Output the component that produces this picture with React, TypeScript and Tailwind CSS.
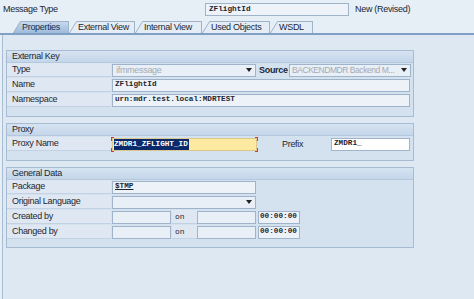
import React from 'react';

const SANS = "font-['Liberation_Sans',Arial,sans-serif] text-[9px] tracking-[-0.3px] leading-none whitespace-nowrap text-[#1c2733]";
const MONO = "font-['Liberation_Mono','Courier_New',monospace] text-[7.7px] font-bold leading-none whitespace-nowrap text-[#1c2733]";

const Arrow = () => (
  <svg width="6" height="4" viewBox="0 0 6 4" className="shrink-0 mx-[3px]">
    <path d="M0 0H6L3 4Z" fill="#222" />
  </svg>
);

function Tab({ label, width, active = false }: { label: string; width: number; active?: boolean }) {
  const fill = active ? 'url(#tabActive)' : '#e4ecf5';
  return (
    <div className="flex h-[12px]">
      <svg width="8" height="12" viewBox="0 0 8 12" className="shrink-0">
        <defs>
          <linearGradient id="tabActive" x1="0" y1="0" x2="0" y2="1">
            <stop offset="0" stopColor="#c6d8ed" />
            <stop offset="1" stopColor="#9fbbdb" />
          </linearGradient>
        </defs>
        <path d="M0 12L7 0H8V12Z" fill={fill} />
        <path d="M0.5 12L7.5 0.5H8" stroke="#9fb3c9" strokeWidth="1" fill="none" />
      </svg>
      <div
        style={{ width }}
        className={`h-full border-t border-r border-[#9fb3c9] pl-[1px] flex items-center ${SANS} ${
          active ? 'bg-gradient-to-b from-[#c6d8ed] to-[#9fbbdb] !text-[#15304f]' : 'bg-[#e4ecf5]'
        }`}
      >
        {label}
      </div>
    </div>
  );
}

function Group({ title, height, children }: { title: string; height: number; children: React.ReactNode }) {
  return (
    <div style={{ height }} className="w-[408px] border border-[#a7bcd3] bg-[#d4e2f0] flex flex-col">
      <div className={`h-[12px] shrink-0 border-b border-[#b4c7dc] bg-gradient-to-b from-[#d6e3f1] to-[#c4d6ea] pl-[5px] flex items-center ${SANS}`}>
        {title}
      </div>
      <div className="flex flex-col gap-[1px]">{children}</div>
    </div>
  );
}

function Label({ text }: { text: string }) {
  return (
    <div className={`w-[104px] h-full shrink-0 bg-[#dfe8f2] border-b border-[#c3d2e3] pl-[5px] flex items-center ${SANS}`}>
      {text}
    </div>
  );
}

const box = 'h-[13px] border border-[#9fb4ca] flex items-center shrink-0 overflow-hidden';

export default function App() {
  return (
    <div className="w-[474px] h-[299px] overflow-hidden bg-[#e6eef6] flex flex-col">
      {/* header */}
      <div className="h-[21px] shrink-0 flex items-center pb-[2px]">
        <span className={`pl-[3px] w-[205px] ${SANS}`}>Message Type</span>
        <div className={`${box} w-[144px] bg-[#eef3f9] pl-[3px] ${MONO}`}>ZFlightId</div>
        <span className={`ml-[6px] ${SANS}`}>New (Revised)</span>
      </div>

      {/* tabs */}
      <div className="h-[12px] shrink-0 flex pl-[13px]">
        <Tab label="Properties" width={48} active />
        <Tab label="External View" width={58} />
        <Tab label="Internal View" width={59} />
        <Tab label="Used Objects" width={60} />
        <Tab label="WSDL" width={35} />
      </div>
      <div className="h-[2px] shrink-0 bg-[#7f9fc4]" />

      {/* content */}
      <div className="flex-1 ml-[2px] border-l border-[#a9bdd2] bg-[#dee8f3] pl-[3px] pt-[15px] flex flex-col gap-[6px]">
        <Group title="External Key" height={67}>
          <div className="h-[14px] flex items-center">
            <Label text="Type" />
            <div className={`${box} ml-[1px] w-[144px] bg-[#e9eff6] pl-[3px] ${SANS} !text-[#a3abb4]`}>
              <span className="flex-1">ifmmessage</span>
              <Arrow />
            </div>
            <div className={`w-[33px] pl-[3px] font-bold ${SANS}`}>Source</div>
            <div className={`${box} w-[122px] bg-[#e9eff6] pl-[2px] ${SANS} !text-[#a3abb4]`}>
              <span className="flex-1 text-[8.5px] tracking-[-0.45px]">BACKENDMDR Backend M...</span>
              <Arrow />
            </div>
          </div>
          <div className="h-[14px] flex items-center">
            <Label text="Name" />
            <div className={`${box} ml-[1px] w-[298px] bg-[#edf2f8] pl-[2px] ${MONO}`}>ZFlightId</div>
          </div>
          <div className="h-[14px] flex items-center">
            <Label text="Namespace" />
            <div className={`${box} ml-[1px] w-[298px] bg-[#edf2f8] pl-[2px] ${MONO}`}>urn:mdr.test.local:MDRTEST</div>
          </div>
        </Group>

        <Group title="Proxy" height={38}>
          <div className="h-[14px] mt-[1px] flex items-center">
            <Label text="Proxy Name" />
            <div className={`${box} !overflow-visible relative ml-[1px] w-[145px] bg-[#fee9a1] border-[#d9c88a] pl-[1px] ${MONO}`}>
              <span className="bg-[#0b2a6b] text-white leading-[11px] pr-[1px]">ZMDR1_ZFLIGHT_ID</span>
              <span className="absolute -left-[2px] -top-[2px] w-[3px] h-[4px] border-l border-t border-[#d83a3a]" />
              <span className="absolute -left-[2px] -bottom-[2px] w-[3px] h-[4px] border-l border-b border-[#d83a3a]" />
              <span className="absolute -right-[2px] -top-[2px] w-[3px] h-[4px] border-r border-t border-[#d83a3a]" />
              <span className="absolute -right-[2px] -bottom-[2px] w-[3px] h-[4px] border-r border-b border-[#d83a3a]" />
            </div>
            <div className={`w-[74px] pl-[25px] ${SANS}`}>Prefix</div>
            <div className={`${box} w-[79px] bg-white pl-[2px] ${MONO}`}>ZMDR1_</div>
          </div>
        </Group>

        <Group title="General Data" height={81}>
          <div className="h-[14px] flex items-center">
            <Label text="Package" />
            <div className={`${box} ml-[1px] w-[144px] bg-[#edf2f8] pl-[2px] ${MONO}`}>
              <span className="underline">$TMP</span>
            </div>
          </div>
          <div className="h-[14px] flex items-center">
            <Label text="Original Language" />
            <div className={`${box} ml-[1px] w-[144px] bg-[#e9eff6] justify-end`}>
              <Arrow />
            </div>
          </div>
          {['Created by', 'Changed by'].map((t) => (
            <div key={t} className="h-[14px] flex items-center">
              <Label text={t} />
              <div className={`${box} ml-[1px] w-[59px] bg-[#e9eff6]`} />
              <div className="w-[25px] h-full ml-[1px] bg-[#dfe8f2] border-b border-[#c3d2e3] pl-[3px] flex items-center font-['Liberation_Mono',monospace] text-[8px] text-[#1c2733]">
                on
              </div>
              <div className={`${box} w-[59px] bg-[#e9eff6]`} />
              <div className={`${box} ml-[2px] w-[42px] bg-[#edf2f8] pl-[1px] ${MONO}`}>00:00:00</div>
            </div>
          ))}
        </Group>
      </div>
    </div>
  );
}
